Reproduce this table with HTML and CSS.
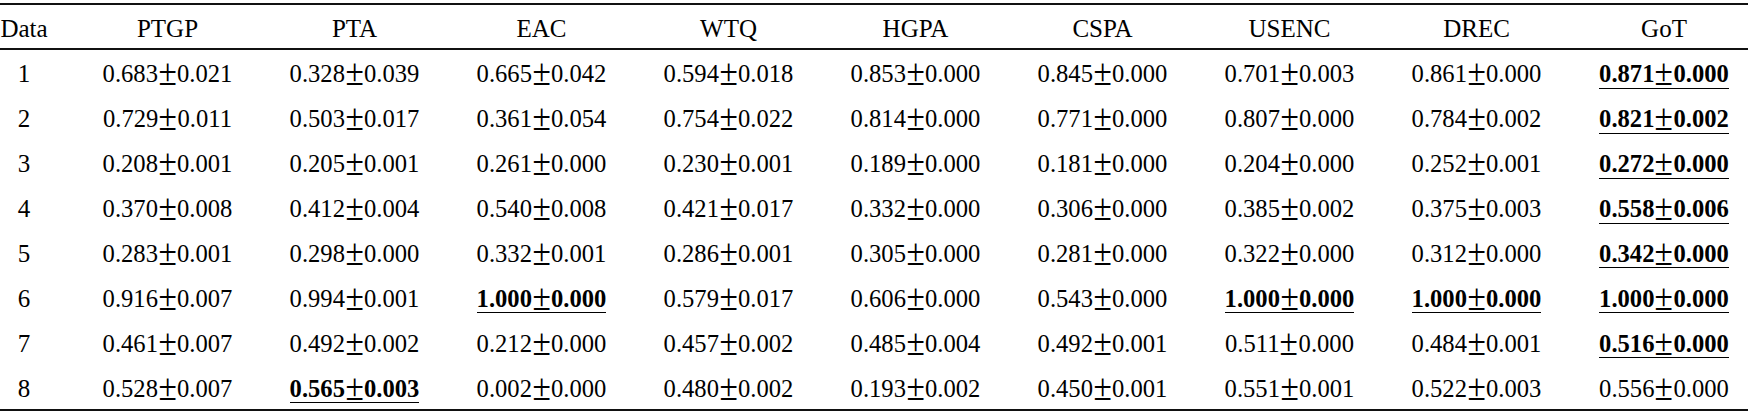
FILE: index.html
```html
<!DOCTYPE html>
<html lang="en">
<head>
<meta charset="utf-8">
<title>Results table</title>
<link rel="stylesheet" href="styles.css">
</head>
<body>
<table class="results">
  <colgroup>
    <col class="c-data">
    <col class="c-num"><col class="c-num"><col class="c-num"><col class="c-num">
    <col class="c-num"><col class="c-num"><col class="c-num"><col class="c-num">
    <col class="c-last">
  </colgroup>
  <thead>
    <tr>
      <th class="first">Data</th><th>PTGP</th><th>PTA</th><th>EAC</th><th>WTQ</th><th>HGPA</th><th>CSPA</th><th>USENC</th><th>DREC</th><th class="last">GoT</th>
    </tr>
  </thead>
  <tbody>
    <tr>
      <td class="first">1</td>
      <td>0.683<span class="pm">±</span>0.021</td>
      <td>0.328<span class="pm">±</span>0.039</td>
      <td>0.665<span class="pm">±</span>0.042</td>
      <td>0.594<span class="pm">±</span>0.018</td>
      <td>0.853<span class="pm">±</span>0.000</td>
      <td>0.845<span class="pm">±</span>0.000</td>
      <td>0.701<span class="pm">±</span>0.003</td>
      <td>0.861<span class="pm">±</span>0.000</td>
      <td class="last"><span class="best">0.871<span class="pm">±</span>0.000</span></td>
    </tr>
    <tr>
      <td class="first">2</td>
      <td>0.729<span class="pm">±</span>0.011</td>
      <td>0.503<span class="pm">±</span>0.017</td>
      <td>0.361<span class="pm">±</span>0.054</td>
      <td>0.754<span class="pm">±</span>0.022</td>
      <td>0.814<span class="pm">±</span>0.000</td>
      <td>0.771<span class="pm">±</span>0.000</td>
      <td>0.807<span class="pm">±</span>0.000</td>
      <td>0.784<span class="pm">±</span>0.002</td>
      <td class="last"><span class="best">0.821<span class="pm">±</span>0.002</span></td>
    </tr>
    <tr>
      <td class="first">3</td>
      <td>0.208<span class="pm">±</span>0.001</td>
      <td>0.205<span class="pm">±</span>0.001</td>
      <td>0.261<span class="pm">±</span>0.000</td>
      <td>0.230<span class="pm">±</span>0.001</td>
      <td>0.189<span class="pm">±</span>0.000</td>
      <td>0.181<span class="pm">±</span>0.000</td>
      <td>0.204<span class="pm">±</span>0.000</td>
      <td>0.252<span class="pm">±</span>0.001</td>
      <td class="last"><span class="best">0.272<span class="pm">±</span>0.000</span></td>
    </tr>
    <tr>
      <td class="first">4</td>
      <td>0.370<span class="pm">±</span>0.008</td>
      <td>0.412<span class="pm">±</span>0.004</td>
      <td>0.540<span class="pm">±</span>0.008</td>
      <td>0.421<span class="pm">±</span>0.017</td>
      <td>0.332<span class="pm">±</span>0.000</td>
      <td>0.306<span class="pm">±</span>0.000</td>
      <td>0.385<span class="pm">±</span>0.002</td>
      <td>0.375<span class="pm">±</span>0.003</td>
      <td class="last"><span class="best">0.558<span class="pm">±</span>0.006</span></td>
    </tr>
    <tr>
      <td class="first">5</td>
      <td>0.283<span class="pm">±</span>0.001</td>
      <td>0.298<span class="pm">±</span>0.000</td>
      <td>0.332<span class="pm">±</span>0.001</td>
      <td>0.286<span class="pm">±</span>0.001</td>
      <td>0.305<span class="pm">±</span>0.000</td>
      <td>0.281<span class="pm">±</span>0.000</td>
      <td>0.322<span class="pm">±</span>0.000</td>
      <td>0.312<span class="pm">±</span>0.000</td>
      <td class="last"><span class="best">0.342<span class="pm">±</span>0.000</span></td>
    </tr>
    <tr>
      <td class="first">6</td>
      <td>0.916<span class="pm">±</span>0.007</td>
      <td>0.994<span class="pm">±</span>0.001</td>
      <td><span class="best">1.000<span class="pm">±</span>0.000</span></td>
      <td>0.579<span class="pm">±</span>0.017</td>
      <td>0.606<span class="pm">±</span>0.000</td>
      <td>0.543<span class="pm">±</span>0.000</td>
      <td><span class="best">1.000<span class="pm">±</span>0.000</span></td>
      <td><span class="best">1.000<span class="pm">±</span>0.000</span></td>
      <td class="last"><span class="best">1.000<span class="pm">±</span>0.000</span></td>
    </tr>
    <tr>
      <td class="first">7</td>
      <td>0.461<span class="pm">±</span>0.007</td>
      <td>0.492<span class="pm">±</span>0.002</td>
      <td>0.212<span class="pm">±</span>0.000</td>
      <td>0.457<span class="pm">±</span>0.002</td>
      <td>0.485<span class="pm">±</span>0.004</td>
      <td>0.492<span class="pm">±</span>0.001</td>
      <td>0.511<span class="pm">±</span>0.000</td>
      <td>0.484<span class="pm">±</span>0.001</td>
      <td class="last"><span class="best">0.516<span class="pm">±</span>0.000</span></td>
    </tr>
    <tr class="end">
      <td class="first">8</td>
      <td>0.528<span class="pm">±</span>0.007</td>
      <td><span class="best">0.565<span class="pm">±</span>0.003</span></td>
      <td>0.002<span class="pm">±</span>0.000</td>
      <td>0.480<span class="pm">±</span>0.002</td>
      <td>0.193<span class="pm">±</span>0.002</td>
      <td>0.450<span class="pm">±</span>0.001</td>
      <td>0.551<span class="pm">±</span>0.001</td>
      <td>0.522<span class="pm">±</span>0.003</td>
      <td class="last">0.556<span class="pm">±</span>0.000</td>
    </tr>
  </tbody>
</table>
</body>
</html>
```
FILE: styles.css
```css
html, body {
  margin: 0;
  padding: 0;
  background: #ffffff;
}

body {
  font-family: "Liberation Serif", "Times New Roman", serif;
  font-size: 24.6px;
  color: #000000;
}

.results {
  margin-top: 3px;
  width: 1748px;
  table-layout: fixed;
  border-collapse: separate;
  border-spacing: 0;
}

.c-data { width: 74px; }
.c-num { width: 187px; }
.c-last { width: 178px; }

.results th,
.results td {
  text-align: center;
  white-space: nowrap;
  font-weight: normal;
  padding-left: 0;
  padding-right: 0;
}

.results th {
  border-top: 2px solid #111;
  border-bottom: 2px solid #111;
  padding-top: 5px;
  padding-bottom: 0;
  line-height: 38px;
  font-size: 25px;
}

.results td {
  padding-top: 4.3px;
  padding-bottom: 0;
  line-height: 40.6px;
}

.results .end td {
  border-bottom: 2px solid #111;
}

.results .first {
  padding-right: 26px;
  font-size: 25px;
}

.results .last {
  padding-left: 10px;
}

.pm {
  display: inline-block;
  width: 0.778em;
  line-height: 1em;
  text-align: center;
  font-weight: normal;
  transform-origin: 50% 0.585em;
  transform: scale(1.36, 1.5);
}

.best {
  display: inline-block;
  font-weight: bold;
  line-height: 1em;
  padding-bottom: 1px;
  border-bottom: 1.6px solid #000;
}
```
